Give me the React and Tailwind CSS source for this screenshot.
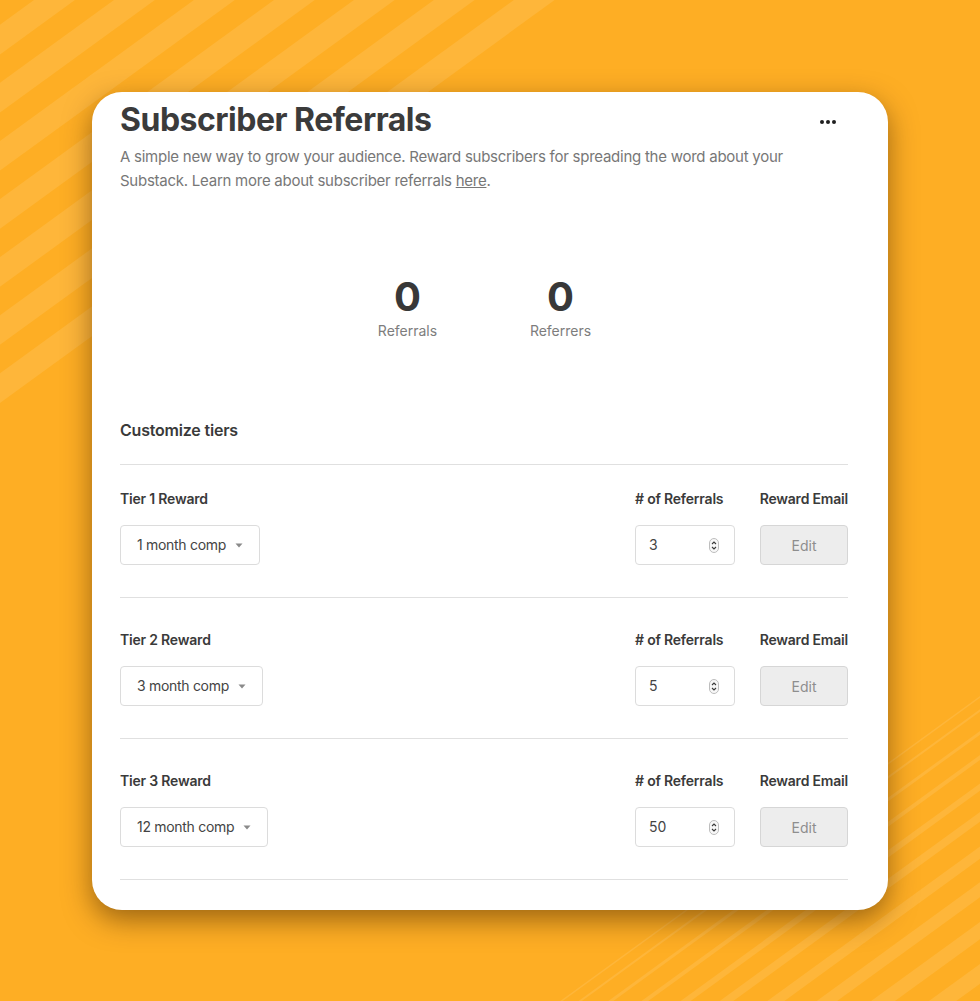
import React from "react";

const S = Math.sin((36 * Math.PI) / 180);
const C = Math.cos((36 * Math.PI) / 180);

function tlBand(d1, d2) {
  return `0,${d1 / C} ${d1 / S},0 ${d2 / S},0 0,${d2 / C}`;
}
function brBand(d1, d2) {
  return `980,${1001 - d1 / C} ${980 - d1 / S},1001 ${980 - d2 / S},1001 980,${1001 - d2 / C}`;
}

const topBands = [0, 1, 2, 3, 4, 5, 6].map((k) => [326 - 47 * k - 24, 326 - 47 * k]);
const brBands = [
  [246, 1.5],
  [235, 2],
  [217, 3],
  [197, 4],
  [173, 6],
  [149, 8],
  [120, 10],
  [90, 12],
  [57, 14],
  [22, 16],
].map(([c, w]) => [c - w / 2, c + w / 2]);

function Background() {
  return (
    <svg className="absolute inset-0" width="980" height="1001" viewBox="0 0 980 1001">
      {topBands.map(([a, b], i) => (
        <polygon key={i} points={tlBand(a, b)} fill="rgba(255,255,255,0.1)" />
      ))}
      {brBands.map(([a, b], i) => (
        <polygon key={i} points={brBand(a, b)} fill="rgba(255,255,255,0.1)" />
      ))}
    </svg>
  );
}

function Dots() {
  return (
    <svg width="18" height="6" viewBox="0 0 18 6">
      <circle cx="3" cy="3" r="2" fill="#1f1f1f" />
      <circle cx="9" cy="3" r="2" fill="#1f1f1f" />
      <circle cx="15" cy="3" r="2" fill="#1f1f1f" />
    </svg>
  );
}

function Caret() {
  return (
    <svg width="8" height="5" viewBox="0 0 8 5">
      <path d="M0.5 0.5 L7.5 0.5 L4 4.5 Z" fill="#8a8a8a" />
    </svg>
  );
}

function Spinner() {
  return (
    <svg width="10" height="15" viewBox="0 0 10 15">
      <rect x="0.5" y="0.5" width="9" height="14" rx="4.5" fill="#f7f7f7" stroke="#bdbdbd" />
      <path d="M3 6 L5 4 L7 6" fill="none" stroke="#3a3a3a" strokeWidth="1.1" />
      <path d="M3 9 L5 11 L7 9" fill="none" stroke="#3a3a3a" strokeWidth="1.1" />
    </svg>
  );
}

const tiers = [
  { name: "Tier 1 Reward", comp: "1 month comp", n: "3" },
  { name: "Tier 2 Reward", comp: "3 month comp", n: "5" },
  { name: "Tier 3 Reward", comp: "12 month comp", n: "50" },
];

function TierRow({ tier, first }) {
  return (
    <div className={`flex items-start justify-between border-b border-[#e0e0e0] pb-8 ${first ? "pt-6" : "pt-8"}`}>
      <div className="flex flex-col">
        <div className="text-sm leading-5 font-semibold tracking-[-0.2px] text-[#3a3a3a]">{tier.name}</div>
        <div className="mt-4 inline-flex h-10 items-center gap-[9px] self-start rounded-[4px] border border-[#dcdcdc] bg-white pl-4 pr-[16px] text-sm tracking-[-0.3px] text-[#444444]">
          <span>{tier.comp}</span>
          <Caret />
        </div>
      </div>
      <div className="flex gap-6">
        <div className="flex w-[100px] flex-col">
          <div className="text-sm leading-5 font-semibold tracking-[-0.2px] whitespace-nowrap text-[#3a3a3a]">
            # of Referrals
          </div>
          <div className="mt-4 flex h-10 items-center justify-between rounded-[4px] border border-[#dcdcdc] bg-white pl-[13px] pr-[15px] text-sm text-[#444444]">
            <span>{tier.n}</span>
            <Spinner />
          </div>
        </div>
        <div className="flex w-[89px] flex-col items-end">
          <div className="text-sm leading-5 font-semibold tracking-[-0.2px] whitespace-nowrap text-[#3a3a3a]">
            Reward Email
          </div>
          <div className="mt-4 flex h-10 w-[88px] items-center justify-center rounded-[4px] border border-[#d6d6d6] bg-[#ededed] pt-px text-sm text-[#8e8e8e]">
            Edit
          </div>
        </div>
      </div>
    </div>
  );
}

export default function App() {
  return (
    <div
      className="relative h-[1001px] w-[980px] overflow-hidden bg-[#feae24]"
      style={{ fontFamily: "Inter, 'Noto Sans', sans-serif" }}
    >
      <Background />
      <div className="relative ml-[92px] mt-[92px] w-[796px] rounded-[30px] bg-white pb-[30px] pl-7 pr-10 pt-2 shadow-[0_10px_28px_rgba(60,30,0,0.5)]">
        <div className="flex items-center justify-between">
          <h1 className="text-[32px] leading-10 font-bold tracking-[-0.5px] text-[#3b3b3b]">
            Subscriber Referrals
          </h1>
          <div className="mr-1 mt-[3px] flex h-8 w-8 items-center justify-center">
            <Dots />
          </div>
        </div>
        <p className="mt-[5px] text-[15px] leading-6 font-normal tracking-[-0.25px] text-[#777777]">
          A simple new way to grow your audience. Reward subscribers for spreading the word about your
          <br />
          Substack. Learn more about subscriber referrals <span className="underline">here</span>.
        </p>

        <div className="mt-20 flex justify-center">
          <div className="flex w-[153px] flex-col items-center">
            <div className="text-[40px] leading-[48px] font-bold text-[#383838]">0</div>
            <div className="text-sm leading-5 text-[#7d7d7d]">Referrals</div>
          </div>
          <div className="flex w-[153px] flex-col items-center">
            <div className="text-[40px] leading-[48px] font-bold text-[#383838]">0</div>
            <div className="text-sm leading-5 text-[#7d7d7d]">Referrers</div>
          </div>
        </div>

        <div className="mt-[77px] text-base leading-6 font-semibold tracking-[-0.2px] text-[#3a3a3a]">
          Customize tiers
        </div>
        <div className="mt-[22px] h-px bg-[#e0e0e0]" />

        {tiers.map((t, i) => (
          <TierRow key={t.name} tier={t} first={i === 0} />
        ))}
      </div>
    </div>
  );
}
